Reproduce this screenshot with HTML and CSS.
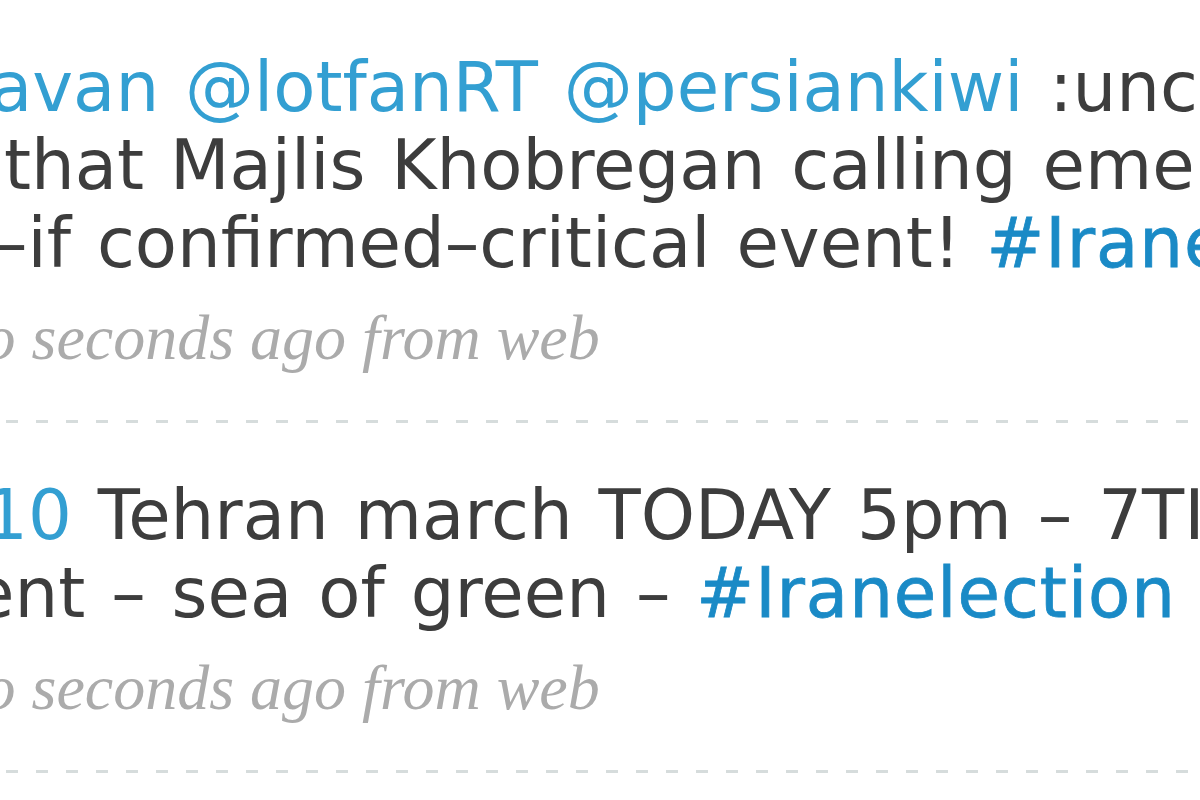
FILE: index.html
```html
<!DOCTYPE html>
<html lang="en">
<head>
  <meta charset="UTF-8" />
  <title>Timeline</title>
  <link rel="stylesheet" href="styles.css">
</head>
<body>
  <ol class="timeline">
    <li class="status">
      <div class="entry">
        <span class="line l1"><a class="mention">avan</a> <a class="mention">@lotfanRT</a> <a class="mention">@persiankiwi</a> :unconfirmed</span>
        <span class="line l2">that Majlis Khobregan calling emergency</span>
        <span class="line l3">–if confirmed–critical event! <a class="hashtag">#Iranelection</a></span>
      </div>
      <span class="meta">two seconds ago from web</span>
    </li>
    <li class="status">
      <div class="entry">
        <span class="line l4"><a class="mention">10</a> Tehran march TODAY 5pm – 7TIR</span>
        <span class="line l5">ent – sea of green – <a class="hashtag">#Iranelection</a></span>
      </div>
      <span class="meta">two seconds ago from web</span>
    </li>
  </ol>
</body>
</html>
```

FILE: styles.css
```css
* {
  box-sizing: border-box;
  margin: 0;
  padding: 0;
}
html, body {
  background: #fff;
  overflow: hidden;
}
body {
  width: 1200px;
  height: 800px;
}
.timeline {
  list-style: none;
  padding-top: 48px;
}
.status + .status {
  padding-top: 53px;
}
/* dashed divider under each status */
.status::after {
  content: "";
  display: block;
  height: 3px;
  margin-top: 47px;
  background: repeating-linear-gradient(90deg, #d6dcdc 0 12px, transparent 12px 30px);
  background-position: 6px 0;
}
.entry {
  font-family: "DejaVu Sans", sans-serif;
  font-size: 69px;
  line-height: 78px;
  word-spacing: 4px;
  color: #3d3d3d;
}
.line {
  display: block;
  white-space: nowrap;
}
.mention {
  color: #339fd2;
}
.hashtag {
  color: #1a8ac6;
  letter-spacing: 1px;
  -webkit-text-stroke: 0.8px #1a8ac6;
}
.l1 { margin-left: -10px; }
.l2 { margin-left: 4px; }
.l3 { margin-left: -7px; }
.l4 { margin-left: -16px; }
.l5 { margin-left: -28px; }
.meta {
  display: block;
  margin-top: 21px;
  margin-left: -77px;
  font-family: "Liberation Serif", serif;
  font-style: italic;
  font-size: 64px;
  line-height: 70px;
  color: #ababab;
  white-space: nowrap;
}
```
